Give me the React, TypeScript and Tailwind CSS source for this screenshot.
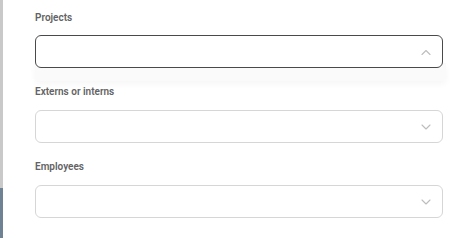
import React from "react";

function Chevron({ up }: { up?: boolean }) {
  return (
    <svg width="10" height="6" viewBox="0 0 10 6" fill="none" className="shrink-0">
      <path
        d={up ? "M1 5.5 L5 1.5 L9 5.5" : "M1 1 L5 5 L9 1"}
        stroke="#bdbdbd"
        strokeWidth="1.1"
        strokeLinecap="round"
        strokeLinejoin="round"
      />
    </svg>
  );
}

function Field({ label, open, className }: { label: string; open?: boolean; className?: string }) {
  return (
    <div className={className}>
      <div className="h-[14px] text-[10px] leading-[14px] font-semibold text-[#636363]">{label}</div>
      <div className="relative">
        <div
          className={
            open
              ? "relative z-10 flex h-[33px] items-center justify-end rounded-[6px] border-[1.5px] border-[#4a4a4a] bg-white pr-[11px]"
              : "flex h-[33px] items-center justify-end rounded-[6px] border border-[#d6d6d6] bg-white pr-[11px]"
          }
        >
          <Chevron up={open} />
        </div>
        {open && (
          <div className="absolute left-0 right-[-3px] top-[28px] h-[18px] rounded-b-[4px] bg-[#fafafa] shadow-[0_3px_6px_rgba(0,0,0,0.04)]" />
        )}
      </div>
    </div>
  );
}

export default function App() {
  return (
    <div className="flex h-[238px] w-[474px] bg-white" style={{ fontFamily: "Roboto, 'Noto Sans', sans-serif" }}>
      <div className="flex w-[3px] flex-col">
        <div className="h-[188px] bg-[#c9c9c9]" />
        <div className="flex-1 bg-[#6f8293]" />
      </div>
      <div className="flex-1 pl-[32px] pr-[31px]">
        <Field label="Projects" open className="mt-[11px] [&>div:first-child]:mb-[10px]" />
        <Field label="Externs or interns" className="relative z-20 mt-[17px] [&>div:first-child]:mb-[11px]" />
        <Field label="Employees" className="mt-[17px] [&>div:first-child]:mb-[11px]" />
      </div>
    </div>
  );
}
